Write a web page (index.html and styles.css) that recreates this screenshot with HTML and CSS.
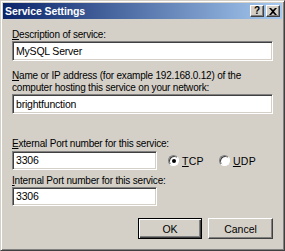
FILE: index.html
```html
<!DOCTYPE html>
<html lang="en">
<head>
    <meta charset="UTF-8">
    <title>Service Settings</title>
    <link rel="stylesheet" href="styles.css">
</head>
<body>
    <div class="window">
        <div class="titlebar">
            <span class="title">Service Settings</span>
            <div class="title-buttons">
                <span class="tbtn help">?</span>
                <span class="tbtn close">
                    <svg width="8" height="7" viewBox="0 0 8 7"><path d="M0 0h2l2 2 2-2h2L5 3.5 8 7H6L4 5 2 7H0l3-3.5z" fill="#000"/></svg>
                </span>
            </div>
        </div>

        <div class="content">
            <label class="lbl first"><u>D</u>escription of service:</label>
            <div class="field wide">MySQL Server</div>

            <label class="lbl two"><u>N</u>ame or IP address (for example 192.168.0.12) of the<br>computer hosting this service on your network:</label>
            <div class="field wide">brightfunction</div>

            <label class="lbl ext"><u>E</u>xternal Port number for this service:</label>
            <div class="port-row">
                <div class="field narrow">3306</div>
                <div class="radios">
                    <span class="radio checked"></span><span class="rtext"><u>T</u>CP</span>
                    <span class="radio"></span><span class="rtext"><u>U</u>DP</span>
                </div>
            </div>
            <label class="lbl int"><u>I</u>nternal Port number for this service:</label>
            <div class="field narrow">3306</div>

            <div class="actions">
                <button class="btn default">OK</button>
                <button class="btn">Cancel</button>
            </div>
        </div>
    </div>
</body>
</html>
```

FILE: styles.css
```css
body {
    margin: 0;
    background: #d4d0c8;
    font-family: 'Liberation Sans', Arial, sans-serif;
    font-size: 10px;
    letter-spacing: -0.2px;
    color: #000;
}

.window {
    width: 285px;
    height: 251px;
    box-sizing: border-box;
    background: #d4d0c8;
    border-top: 1px solid #d4d0c8;
    border-left: 1px solid #d4d0c8;
    border-right: 1px solid #404040;
    border-bottom: 1px solid #404040;
    box-shadow: inset 1px 1px #fff, inset -1px -1px #808080;
    padding: 2px;
    overflow: hidden;
}

.titlebar {
    height: 16px;
    background: linear-gradient(to right, #0a246a, #a6caf0);
    display: flex;
    align-items: center;
    justify-content: space-between;
    padding: 0 2px 0 2px;
}

.title {
    color: #fff;
    font-weight: bold;
    font-size: 10.5px;
    letter-spacing: -0.1px;
}

.title-buttons {
    display: flex;
    gap: 2px;
}

.tbtn {
    width: 14px;
    height: 12px;
    box-sizing: border-box;
    background: #d4d0c8;
    border-top: 1px solid #fff;
    border-left: 1px solid #fff;
    border-right: 1px solid #404040;
    border-bottom: 1px solid #404040;
    box-shadow: inset -1px -1px #808080;
    display: flex;
    align-items: center;
    justify-content: center;
    font-weight: bold;
    font-size: 10px;
    line-height: 1;
}

.content {
    padding: 0 9px;
    display: flex;
    flex-direction: column;
}

.lbl {
    display: block;
    line-height: 13px;
    color: #000;
    white-space: nowrap;
}

.lbl.first {
    margin-top: 9px;
}

.lbl.two {
    margin-top: 9px;
    line-height: 12px;
}

.lbl.ext {
    margin-top: 23px;
    margin-bottom: 1px;
}

.lbl.int {
    margin-top: 4px;
}

.field {
    height: 20px;
    box-sizing: border-box;
    flex-shrink: 0;
    background: #fff;
    border-top: 1px solid #808080;
    border-left: 1px solid #808080;
    border-right: 1px solid #fff;
    border-bottom: 1px solid #fff;
    box-shadow: inset 1px 1px #404040, inset -1px -1px #d4d0c8;
    padding: 3px 3px 0 3px;
    line-height: 13px;
    font-size: 10.5px;
}

.field.wide {
    width: 261px;
}

.field.narrow {
    width: 145px;
    height: 19px;
    padding-top: 2px;
}

.port-row {
    display: flex;
    align-items: center;
}

.radios {
    display: flex;
    align-items: center;
    margin-left: 11px;
}

.radio {
    width: 9px;
    height: 9px;
    flex-shrink: 0;
    border-radius: 50%;
    background: #fff;
    border: 1px solid;
    border-color: #808080 #fff #fff #808080;
    box-shadow: inset 1px 1px #404040;
    position: relative;
    margin-right: 3px;
}

.radio.checked::after {
    content: "";
    position: absolute;
    left: 3px;
    top: 3px;
    width: 4px;
    height: 4px;
    border-radius: 50%;
    background: #000;
}

.rtext {
    margin-right: 15px;
    font-size: 10.5px;
    letter-spacing: 0.3px;
}

.rtext:last-child {
    margin-right: 0;
}

.actions {
    display: flex;
    justify-content: flex-end;
    gap: 6px;
    margin-top: 12px;
}

.btn {
    width: 65px;
    height: 21px;
    box-sizing: border-box;
    background: #d4d0c8;
    font-family: 'Liberation Sans', Arial, sans-serif;
    font-size: 10.5px;
    color: #000;
    padding: 0;
    border-top: 1px solid #fff;
    border-left: 1px solid #fff;
    border-right: 1px solid #404040;
    border-bottom: 1px solid #404040;
    box-shadow: inset -1px -1px #808080;
}

.btn.default {
    width: 64px;
    border: 1px solid #000;
    box-shadow: inset 1px 1px #fff, inset -1px -1px #404040, inset -2px -2px #808080;
}
```
